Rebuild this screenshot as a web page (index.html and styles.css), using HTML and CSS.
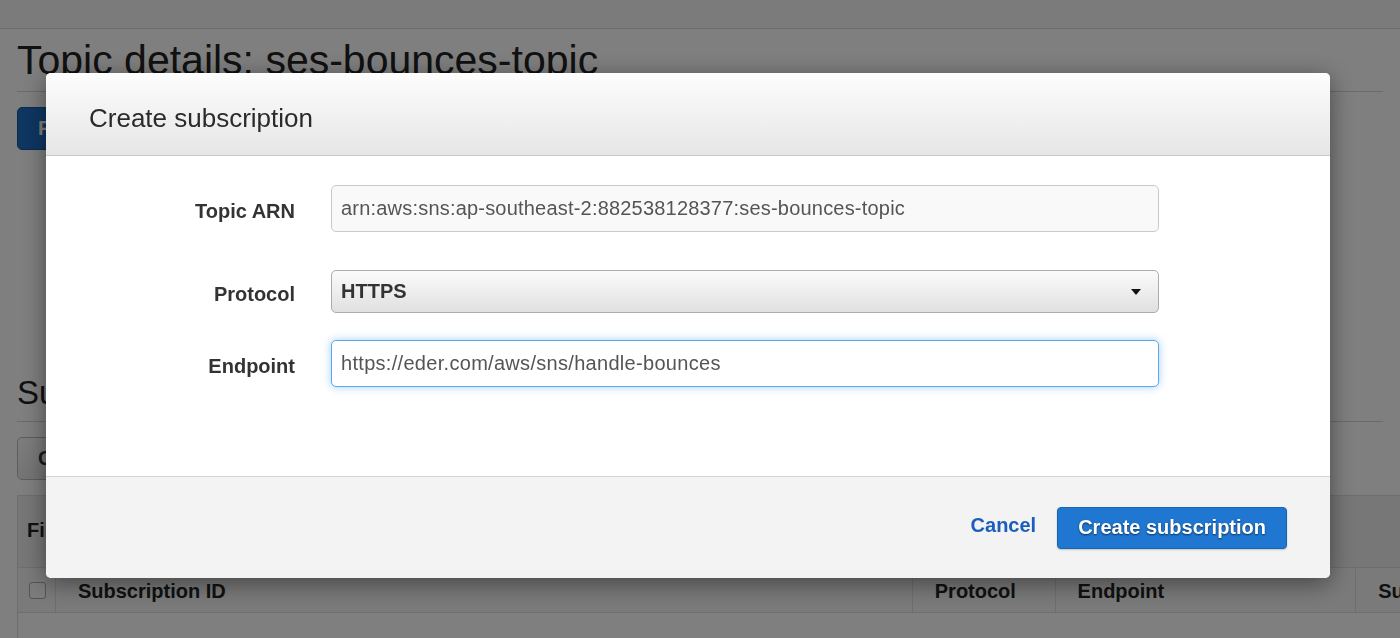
FILE: index.html
```html
<!DOCTYPE html>
<html lang="en">
<head>
    <meta charset="UTF-8">
    <title>Topic details: ses-bounces-topic</title>
    <link rel="stylesheet" href="styles.css">
</head>
<body>
    <div class="topbar"></div>

    <div class="page">
        <div class="page-header">
            <h1>Topic details: ses-bounces-topic</h1>
        </div>
        <button class="btn btn-primary">Publish to topic</button>

        <div class="section-header">
            <h2>Subscriptions</h2>
        </div>
        <button class="btn btn-default">Create subscription</button>

        <div class="table">
            <div class="table-filter">Filter</div>
            <div class="table-row table-head">
                <div class="cell cell-check"><span class="checkbox"></span></div>
                <div class="cell cell-id">Subscription ID</div>
                <div class="cell cell-protocol">Protocol</div>
                <div class="cell cell-endpoint">Endpoint</div>
                <div class="cell cell-subscriber">Subscriber</div>
            </div>
            <div class="table-row table-empty"></div>
        </div>
    </div>

    <div class="overlay">
        <div class="modal">
            <div class="modal-header">
                <h3>Create subscription</h3>
            </div>
            <div class="modal-body">
                <div class="form-row row-arn">
                    <label>Topic ARN</label>
                    <input class="field field-readonly" type="text" value="arn:aws:sns:ap-southeast-2:882538128377:ses-bounces-topic" readonly>
                </div>
                <div class="form-row row-protocol">
                    <label>Protocol</label>
                    <div class="field field-select">
                        <span>HTTPS</span>
                        <span class="caret"></span>
                    </div>
                </div>
                <div class="form-row row-endpoint">
                    <label>Endpoint</label>
                    <input class="field field-focus" type="text" value="https://eder.com/aws/sns/handle-bounces">
                </div>
            </div>
            <div class="modal-footer">
                <a class="link-cancel" href="#">Cancel</a>
                <button class="btn-create">Create subscription</button>
            </div>
        </div>
    </div>
</body>
</html>
```

FILE: styles.css
```css
* {
    box-sizing: border-box;
    margin: 0;
    padding: 0;
}

body {
    font-family: 'Liberation Sans', Arial, sans-serif;
    background: #fff;
    color: #333;
    overflow: hidden;
    height: 638px;
}

.topbar {
    height: 29px;
    background: #f7f7f7;
    border-bottom: 1px solid #d9d9d9;
}

.page {
    padding: 0 0 0 17px;
}

.page-header {
    padding-top: 11px;
    border-bottom: 1px solid #d6d6d6;
    padding-bottom: 11px;
    margin-right: 17px;
}

h1 {
    font-size: 41px;
    font-weight: 400;
    line-height: 40px;
    color: #222;
}

.btn {
    height: 43px;
    padding: 0 20px;
    border-radius: 5px;
    font-family: inherit;
    font-size: 20px;
    font-weight: 700;
}

.btn-primary {
    margin-top: 15px;
    background: #1d6ec4;
    border: 1px solid #17599f;
    color: #fff;
}

.section-header {
    margin-top: 223px;
    border-bottom: 1px solid #d6d6d6;
    padding-bottom: 8px;
    margin-right: 17px;
}

h2 {
    font-size: 33px;
    font-weight: 400;
    line-height: 40px;
    color: #222;
}

.btn-default {
    margin-top: 15px;
    background: linear-gradient(#fafafa, #e8e8e8);
    border: 1px solid #bbb;
    color: #333;
}

.table {
    margin-top: 15px;
    width: 1500px;
    border: 1px solid #ddd;
}

.table-filter {
    height: 72px;
    background: #eeeeee;
    border-bottom: 1px solid #ddd;
    padding: 23px 9px;
    font-size: 20px;
    font-weight: 700;
    color: #222;
}

.table-row {
    display: flex;
    height: 45px;
    border-bottom: 1px solid #ddd;
}

.table-head {
    background: #f4f4f4;
    font-size: 20px;
    font-weight: 700;
    color: #222;
}

.cell {
    display: flex;
    align-items: center;
    padding-left: 22px;
    padding-top: 3px;
    border-right: 1px solid #ddd;
}

.cell-check {
    width: 38px;
    padding-left: 11px;
    padding-top: 1px;
}

.checkbox {
    width: 17px;
    height: 17px;
    border: 1px solid #aaa;
    border-radius: 3px;
    background: #f8f8f8;
}

.cell-id { width: 858px; }
.cell-protocol { width: 143px; }
.cell-endpoint { width: 301px; }
.cell-subscriber { width: 160px; }

.table-empty {
    height: 40px;
}

/* modal */

.overlay {
    position: fixed;
    top: 0;
    left: 0;
    right: 0;
    bottom: 0;
    background: rgba(0, 0, 0, 0.5);
    padding: 73px 0 0 46px;
}

.modal {
    width: 1284px;
    background: #fff;
    border-radius: 5px;
    box-shadow: 0 5px 25px rgba(0, 0, 0, 0.45);
    overflow: hidden;
}

.modal-header {
    height: 83px;
    background: linear-gradient(#fdfdfd, #e6e6e6);
    border-bottom: 1px solid #c8c8c8;
    padding: 30px 43px 0;
}

.modal-header h3 {
    font-size: 26px;
    font-weight: 400;
    line-height: 30px;
    color: #2b2b2b;
}

.modal-body {
    height: 320px;
    padding-top: 29px;
}

.form-row {
    display: flex;
    align-items: center;
}

.form-row label {
    width: 249px;
    text-align: right;
    font-size: 20px;
    font-weight: 700;
    color: #333;
    margin-right: 36px;
    padding-top: 5px;
}

.field {
    width: 828px;
    border-radius: 5px;
    font-family: inherit;
    font-size: 20px;
    letter-spacing: 0.2px;
    color: #555;
    padding: 0 9px;
    outline: none;
}

.field-readonly {
    height: 47px;
    background: #f9f9f9;
    border: 1px solid #c9c9c9;
}

.row-protocol {
    margin-top: 38px;
}

.field-select {
    height: 43px;
    display: flex;
    align-items: center;
    justify-content: space-between;
    background: linear-gradient(#fbfbfb, #e0e0e0);
    border: 1px solid #acacac;
    font-weight: 700;
    letter-spacing: 0;
    color: #333;
    padding-right: 17px;
}

.caret {
    width: 0;
    height: 0;
    border-left: 5px solid transparent;
    border-right: 5px solid transparent;
    border-top: 6px solid #111;
}

.row-endpoint {
    margin-top: 27px;
}

.field-focus {
    height: 47px;
    background: #fff;
    border: 1px solid #5aa8ee;
    box-shadow: 0 0 8px rgba(90, 168, 238, 0.55);
    letter-spacing: 0.3px;
}

.modal-footer {
    height: 102px;
    background: #f3f3f3;
    border-top: 1px solid #d4d4d4;
    display: flex;
    align-items: center;
    justify-content: flex-end;
    padding-right: 43px;
}

.link-cancel {
    font-size: 20px;
    font-weight: 700;
    color: #1b5fbd;
    text-decoration: none;
    margin-right: 21px;
    margin-top: -4px;
}

.btn-create {
    height: 42px;
    padding: 0 20px;
    background: #1f77d2;
    border: 1px solid #1a65b3;
    border-radius: 4px;
    box-shadow: 0 1px 2px rgba(0, 0, 0, 0.2);
    font-family: inherit;
    font-size: 20px;
    font-weight: 700;
    color: #fff;
    text-shadow: 0 1px 2px rgba(0, 0, 0, 0.6);
}
```
